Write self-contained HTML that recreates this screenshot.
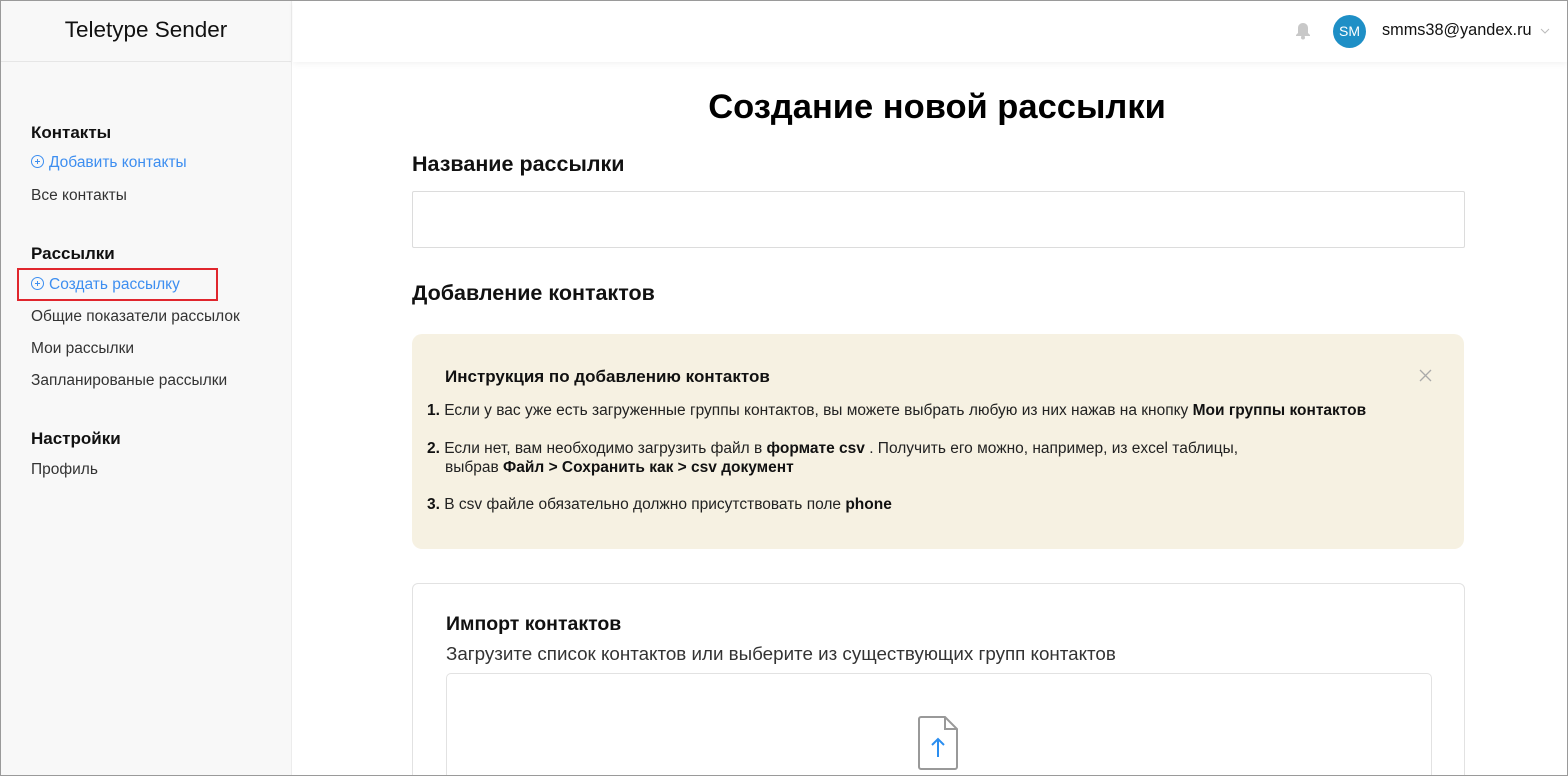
<!DOCTYPE html>
<html><head><meta charset="utf-8"><style>
*{box-sizing:border-box;margin:0;padding:0}
html{width:1568px;height:776px;overflow:hidden}
body{width:1568px;height:776px;overflow:hidden;font-family:"Liberation Sans",sans-serif;color:#111;background:#fff;position:relative}
.frame{position:absolute;left:0;top:0;width:1568px;height:776px;border:1px solid #9a9a9a;z-index:10;pointer-events:none}
.side{position:absolute;left:1px;top:1px;width:291px;height:774px;background:#f8f8f8;border-right:1px solid #ececec}
.logo{height:61px;border-bottom:1px solid #e6e6e6;text-align:center;line-height:58px;font-size:22.5px;font-weight:500}
.side .h{position:absolute;left:30px;font-size:17px;font-weight:bold;color:#111}
.side .l{position:absolute;left:30px;font-size:15.5px;color:#333}
.side .b{color:#3d8ef0}
.pl{display:inline-block;width:13px;height:13px;border:1.5px solid #3d8ef0;border-radius:50%;position:relative;vertical-align:-1px;margin-right:5px}
.pl:before{content:"";position:absolute;left:2.5px;top:4.5px;width:5px;height:1.5px;background:#3d8ef0}
.pl:after{content:"";position:absolute;left:4.5px;top:2.5px;width:1.5px;height:5px;background:#3d8ef0}
.top{position:absolute;left:293px;top:1px;width:1274px;height:61px;background:#fff;box-shadow:0 2px 6px rgba(0,0,0,0.05)}
.abs{position:absolute}
.box{position:absolute;left:412px;top:334px;width:1052px;height:215px;background:#f6f1e2;border-radius:10px}
.box .t{font-size:15.5px;color:#222;position:absolute;left:15px}
.box b{color:#111}
</style></head><body>
<div class="frame"></div>
<div class="side">
<div class="logo">Teletype Sender</div>
<div class="h" style="top:122px">Контакты</div>
<div class="l b" style="top:153px"><span class="pl"></span>Добавить контакты</div>
<div class="l" style="top:186px">Все контакты</div>
<div class="h" style="top:243px">Рассылки</div>
<div class="abs" style="left:16px;top:267px;width:201px;height:33px;border:2px solid #e0262d"></div>
<div class="l b" style="top:275px"><span class="pl"></span>Создать рассылку</div>
<div class="l" style="top:307px">Общие показатели рассылок</div>
<div class="l" style="top:339px">Мои рассылки</div>
<div class="l" style="top:371px">Запланированые рассылки</div>
<div class="h" style="top:428px">Настройки</div>
<div class="l" style="top:460px">Профиль</div>
</div>
<div class="top">
<svg class="abs" style="left:1002px;top:21px" width="16" height="18" viewBox="0 0 16 18"><path d="M8 1c-3 0-5 2.2-5 5v5l-2 2v1h14v-1l-2-2V6c0-2.8-2-5-5-5z" fill="#c8c8c8"/><circle cx="8" cy="15.5" r="2" fill="#c8c8c8"/></svg>
<div class="abs" style="left:1040px;top:14px;width:33px;height:33px;border-radius:50%;background:#1e8fc6;color:#fff;font-size:14px;text-align:center;line-height:33px">SM</div>
<div class="abs" style="left:1089px;top:20px;font-size:16.3px;color:#111">smms38@yandex.ru</div>
<svg class="abs" style="left:1247px;top:27px" width="10" height="6" viewBox="0 0 10 6"><path d="M1 1l4 4 4-4" fill="none" stroke="#bbb" stroke-width="1"/></svg>
</div>
<div class="abs" style="left:300px;width:1274px;top:88px;text-align:center;font-size:34.5px;font-weight:bold;color:#000">Создание новой рассылки</div>
<div class="abs" style="left:412px;top:152px;font-size:21.5px;font-weight:bold">Название рассылки</div>
<div class="abs" style="left:412px;top:191px;width:1053px;height:57px;border:1px solid #dcdcdc;border-radius:2px"></div>
<div class="abs" style="left:412px;top:281px;font-size:21.5px;font-weight:bold">Добавление контактов</div>
<div class="box">
<div class="t" style="left:33px;top:33px;font-size:17px;font-weight:bold;color:#111">Инструкция по добавлению контактов</div>
<svg class="abs" style="left:1007px;top:35px" width="13" height="13" viewBox="0 0 13 13"><path d="M1 1l11 11M12 1L1 12" stroke="#aaa" stroke-width="1.3"/></svg>
<div class="t" style="top:68px"><b>1.</b> Если у вас уже есть загруженные группы контактов, вы можете выбрать любую из них нажав на кнопку <b>Мои группы контактов</b></div>
<div class="t" style="top:106px"><b>2.</b> Если нет, вам необходимо загрузить файл в <b>формате csv</b> . Получить его можно, например, из excel таблицы,</div>
<div class="t" style="top:125px;left:33px">выбрав <b>Файл &gt; Сохранить как &gt; csv документ</b></div>
<div class="t" style="top:162px"><b>3.</b> В csv файле обязательно должно присутствовать поле <b>phone</b></div>
</div>
<div class="abs" style="left:412px;top:583px;width:1053px;height:200px;border:1px solid #e2e2e2;border-radius:6px"></div>
<div class="abs" style="left:446px;top:613px;font-size:19.5px;font-weight:bold">Импорт контактов</div>
<div class="abs" style="left:446px;top:643px;font-size:18.8px;color:#333">Загрузите список контактов или выберите из существующих групп контактов</div>
<div class="abs" style="left:446px;top:673px;width:986px;height:120px;border:1px solid #e2e2e2;border-radius:5px"></div>
<svg class="abs" style="left:917px;top:715px" width="44" height="56" viewBox="0 0 44 56"><path d="M4 2h24l12 12v38a2 2 0 0 1-2 2H4a2 2 0 0 1-2-2V4a2 2 0 0 1 2-2z" fill="#fff" stroke="#999" stroke-width="2"/><path d="M28 2v12h12" fill="none" stroke="#999" stroke-width="2"/><path d="M21 42V24M15 30l6-6 6 6" fill="none" stroke="#2b8ef0" stroke-width="2"/></svg>
</body></html>
